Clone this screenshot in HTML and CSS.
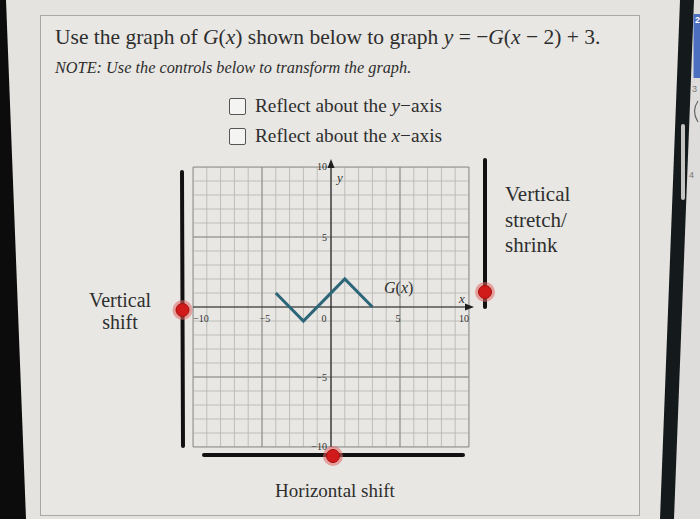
FILE: index.html
```html
<!DOCTYPE html>
<html>
<head>
<meta charset="utf-8">
<link rel="stylesheet" href="styles.css">
</head>
<body>
<svg class="bezel-l" width="28" height="519" viewBox="0 0 28 519"><polygon points="0,0 6,0 26,519 0,519" fill="#0c0c0c"/></svg>
<main class="panel">
  <p class="prompt">Use the graph of <i>G</i>(<i>x</i>) shown below to graph <i>y</i> = −<i>G</i>(<i>x</i> − 2) + 3.</p>
  <p class="note">NOTE: Use the controls below to transform the graph.</p>
  <div class="options">
    <label class="opt"><span class="box"></span><span class="opt-text">Reflect about the <i>y</i>−axis</span></label>
    <label class="opt"><span class="box"></span><span class="opt-text">Reflect about the <i>x</i>−axis</span></label>
  </div>
  <div class="widget">
    <div class="lbl-left">Vertical<br>shift</div>
    <svg class="plot" width="340" height="320" viewBox="165 150 340 320">
      <defs>
        <pattern id="grid" x="192.5" y="165.5" width="13.8" height="14" patternUnits="userSpaceOnUse">
          <path d="M0.5 0V14M0 0.5H13.8" stroke="#b8b8b4" stroke-width="0.9" fill="none"/>
        </pattern>
      </defs>
      <rect x="193" y="166" width="276" height="280" fill="url(#grid)"/>
      <g stroke="#8c8c89" stroke-width="1" fill="none">
        <path d="M193 166H469V446H193Z"/>
        <path d="M262 166V446M400 166V446M193 236H469M193 376H469"/>
      </g>
      <g stroke="#1e1e1e" stroke-width="1.2" fill="#1e1e1e">
        <line x1="193" y1="306" x2="468" y2="306"/>
        <line x1="331" y1="446" x2="331" y2="164"/>
        <polygon points="474,306 465,302.5 465,309.5" stroke="none"/>
        <polygon points="331,158 327.5,167 334.5,167" stroke="none"/>
      </g>
      <g class="tick" font-size="10" fill="#333">
        <text x="327" y="169" text-anchor="end">10</text>
        <text x="327" y="240" text-anchor="end">5</text>
        <text x="327" y="380" text-anchor="end">−5</text>
        <text x="327" y="449" text-anchor="end">−10</text>
        <text x="201" y="321" text-anchor="middle">−10</text>
        <text x="265" y="321" text-anchor="middle">−5</text>
        <text x="324" y="321" text-anchor="middle">0</text>
        <text x="398" y="321" text-anchor="middle">5</text>
        <text x="464" y="321" text-anchor="middle">10</text>
      </g>
      <text class="var" x="337" y="181" font-size="13">y</text>
      <text class="var" x="459" y="302" font-size="13">x</text>
      <text class="glabel" x="384" y="292" font-size="16"><tspan font-style="italic">G</tspan>(<tspan font-style="italic">x</tspan>)</text>
      <polyline points="275.8,292 303.4,320 344.8,278 372.4,306" fill="none" stroke="#2d6579" stroke-width="3" stroke-linejoin="miter"/>
      <g stroke="#111" stroke-width="4" stroke-linecap="round">
        <line x1="182" y1="171" x2="183" y2="445"/>
        <line x1="485" y1="159" x2="485" y2="306"/>
        <line x1="204" y1="454" x2="463" y2="454"/>
      </g>
      <g>
        <circle cx="182.5" cy="309" r="10" fill="#e26464" opacity="0.55"/>
        <circle cx="182.5" cy="309" r="6.5" fill="#d11a1a" stroke="#a30f0f" stroke-width="1"/>
        <circle cx="485" cy="291" r="10" fill="#e26464" opacity="0.55"/>
        <circle cx="485" cy="291" r="6.5" fill="#d11a1a" stroke="#a30f0f" stroke-width="1"/>
        <circle cx="333" cy="455" r="10" fill="#e26464" opacity="0.55"/>
        <circle cx="333" cy="455" r="6.5" fill="#d11a1a" stroke="#a30f0f" stroke-width="1"/>
      </g>
    </svg>
    <div class="lbl-right">Vertical<br>stretch/<br>shrink</div>
    <div class="lbl-bottom">Horizontal shift</div>
  </div>
</main>
<svg class="bezel-r" width="60" height="519" viewBox="0 0 60 519">
  <polygon points="54,0 60,0 60,519 34,519" fill="#dedddb"/>
  <polygon points="40,0 54,0 34,519 20,519" fill="#14191b"/>
  <rect x="41" y="124" width="4" height="76" rx="2" fill="#c4c4c2"/>
  <rect x="53.5" y="14" width="6.5" height="64" fill="#4d6fbf"/>
  <text x="55" y="23" font-size="9" font-weight="bold" fill="#fff" font-family="Liberation Sans, sans-serif">2</text>
  <text x="52" y="92" font-size="9" fill="#777" font-family="Liberation Sans, sans-serif">3</text>
  <path d="M58 101 Q51 111 58 122" fill="none" stroke="#666" stroke-width="1.2"/>
  <text x="49" y="178" font-size="9" fill="#777" font-family="Liberation Sans, sans-serif">4</text>
</svg>
</body>
</html>
```

FILE: styles.css
```css
body {
  margin: 0;
  height: 519px;
  overflow: hidden;
  display: flex;
  background: #e4e3df;
  font-family: "Liberation Serif", "DejaVu Serif", serif;
  color: #2e2e2e;
}

.bezel-l {
  flex: 0 0 28px;
  display: block;
}

.panel {
  flex: 0 0 600px;
  box-sizing: border-box;
  margin: 15px 0 3px 12px;
  border: 1px solid #a9a8a4;
  background: #e8e7e3;
  padding: 8px 0 0 14px;
}

.bezel-r {
  flex: 0 0 60px;
  display: block;
}

.prompt {
  margin: 0;
  font-size: 21.5px;
  line-height: 26px;
  white-space: nowrap;
}

.note {
  margin: 8px 0 0;
  font-size: 16.3px;
  line-height: 20px;
  font-style: italic;
}

.options {
  margin: 13px 0 0 174px;
  display: flex;
  flex-direction: column;
}

.opt {
  display: flex;
  align-items: center;
  height: 30px;
  font-size: 19.3px;
}

.box {
  flex: 0 0 auto;
  width: 15px;
  height: 15px;
  border: 1.5px solid #555;
  border-radius: 2px;
  background: #f4f4f2;
  margin-right: 9px;
}

.widget {
  display: grid;
  grid-template-columns: 90px 340px auto;
  margin-left: 20px;
}

.plot {
  display: block;
  font-family: "Liberation Serif", "DejaVu Serif", serif;
}

.plot .var {
  font-style: italic;
  fill: #333;
}

.plot .glabel {
  fill: #2e2e2e;
}

.lbl-left {
  align-self: center;
  text-align: center;
  font-size: 20px;
  line-height: 22px;
}

.lbl-right {
  padding-top: 31px;
  font-size: 21px;
  line-height: 25.5px;
}

.lbl-bottom {
  grid-column: 2;
  text-align: center;
  font-size: 19px;
  line-height: 24px;
  margin-top: 8px;
}
```
